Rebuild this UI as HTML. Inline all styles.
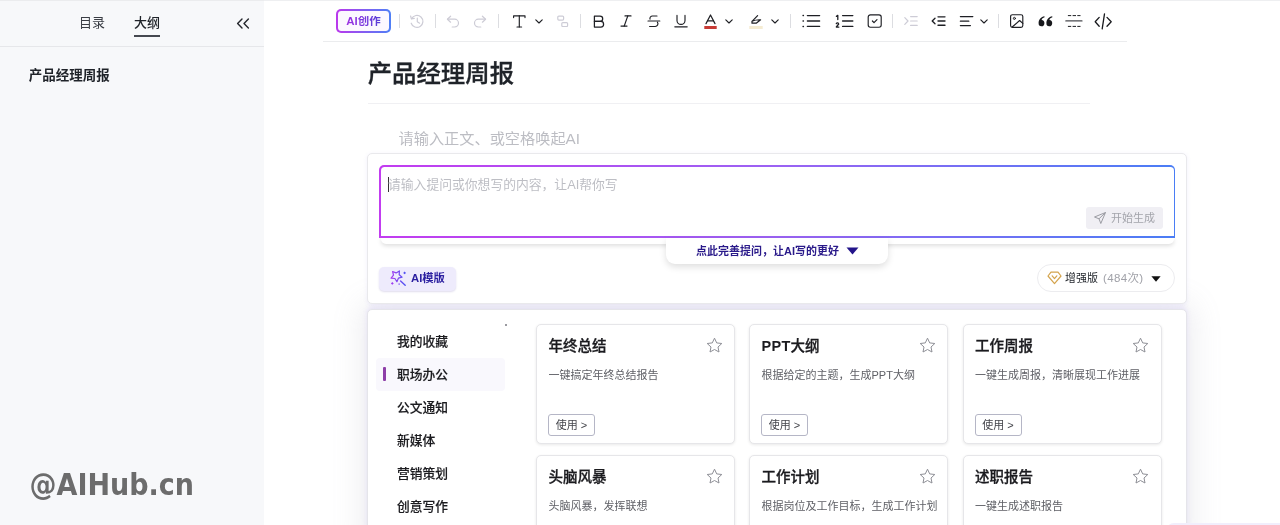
<!DOCTYPE html>
<html lang="zh-CN">
<head>
<meta charset="utf-8">
<title>产品经理周报</title>
<style>
*{box-sizing:border-box;margin:0;padding:0}
html,body{width:1280px;height:525px;overflow:hidden;background:#fff}
body{position:relative;font-family:"Liberation Sans","Noto Sans CJK SC",sans-serif;color:#1f2329;-webkit-font-smoothing:antialiased;will-change:transform}
.abs{position:absolute}
.t{position:absolute;white-space:nowrap;line-height:1}
/* sidebar */
#side{position:absolute;left:0;top:0;width:264px;height:525px;background:#f7f8fa}
#side .topline{position:absolute;left:0;top:0;width:264px;height:1px;background:#ebecee}
#side .hr{position:absolute;left:0;top:46px;width:264px;height:1px;background:#e6e7ea}
/* toolbar */
#tb{position:absolute;left:323px;top:0;width:804px;height:42px;border-bottom:1px solid #ebecee}
#tb svg{position:absolute;overflow:visible}
.sep{position:absolute;top:14px;width:1px;height:14px;background:#dcdde1}
/* ai box */
#aibox{position:absolute;left:367px;top:153px;width:820px;height:151px;border:1px solid #e9e9ec;border-radius:5px;background:#fff;box-shadow:0 1px 4px rgba(120,100,220,.10)}
#inp{position:absolute;left:379.3px;top:165.3px;width:795.6px;height:72.4px;border-radius:5px 5px 0 0;background:linear-gradient(90deg,#c23cf0 0%,#9b62f3 50%,#4a7df5 100%)}
#inp i{position:absolute;left:1.3px;top:1.3px;right:1.3px;bottom:1.3px;background:#fff;border-radius:3.7px 3.7px 0 0}
#inpf{position:absolute;left:380.5px;top:237px;width:793.5px;height:6.5px;border-radius:0 0 5px 5px;background:#fff;box-shadow:0 2px 4px rgba(0,0,0,.13)}
#panel{position:absolute;left:367px;top:309px;width:820px;height:240px;border:1px solid #e5e5ea;border-radius:5px;background:#fff;box-shadow:0 0 30px 6px rgba(140,140,160,.16),0 -2px 5px rgba(124,92,240,.12)}
.card{position:absolute;width:199px;height:119.5px;border:1px solid #e6e6e9;border-radius:5px;background:#fff;box-shadow:0 1px 3px rgba(0,0,0,.09)}
.card .h{position:absolute;left:11.5px;top:12.3px;font-size:14.5px;font-weight:500;line-height:18px;color:#1b1b1f;white-space:nowrap;-webkit-text-stroke:0.3px #1b1b1f}
.card .d{position:absolute;left:11.5px;top:41.7px;font-size:11px;line-height:16px;color:#5f6066;white-space:nowrap}
.card .u{position:absolute;left:11px;top:88.5px;width:47px;height:22px;border:1px solid #b5b6c6;border-radius:3px;font-size:11px;line-height:21px;text-align:center;color:#44454b;white-space:nowrap}
.card svg{position:absolute;left:168.5px;top:12px}
.cat{position:absolute;left:397px;font-size:12.75px;line-height:16px;font-weight:500;color:#1b1b1f;white-space:nowrap;-webkit-text-stroke:0.15px #1b1b1f}
</style>
</head>
<body>

<div id="side">
  <div class="topline"></div>
  <div class="t" style="left:79px;top:16px;font-size:13px;color:#3a3d44">目录</div>
  <div class="t" style="left:134px;top:16px;font-size:13px;font-weight:500;color:#1f2329">大纲</div>
  <div class="abs" style="left:134px;top:35px;width:26px;height:1.7px;background:#454850"></div>
  <svg class="abs" style="left:236px;top:18px" width="14" height="11" viewBox="0 0 14 11" fill="none" stroke="#25272d" stroke-width="1.4" stroke-linecap="round" stroke-linejoin="round"><path d="M6 1 L1.6 5.5 L6 10 M12.4 1 L8 5.5 L12.4 10"/></svg>
  <div class="hr"></div>
  <div class="t" style="left:28.8px;top:68.6px;font-size:13.5px;font-weight:700;color:#1f2329">产品经理周报</div>
  <div class="t" style="left:29.5px;top:470px;font-size:30px;font-weight:700;color:#6c6c6c;font-family:'DejaVu Sans Condensed','DejaVu Sans','Liberation Sans',sans-serif">@AIHub.cn</div>
</div>

<div class="abs" style="left:264px;top:0;width:1016px;height:1px;background:#eeeff1"></div>

<div id="tb">
  <!-- AI创作 button -->
  <div class="abs" style="left:13px;top:9px;width:55px;height:24px;border-radius:5px;background:linear-gradient(90deg,#bb38ec,#4f80f6)"><div class="abs" style="left:1.6px;top:1.6px;right:1.6px;bottom:1.6px;border-radius:3.4px;background:#fcf8ff"></div><div class="t" style="left:0;width:55px;text-align:center;top:6.5px;font-size:11.5px;font-weight:700;color:#7a2be0;background:linear-gradient(90deg,#9a2fe2 20%,#5a40d8 80%);-webkit-background-clip:text;background-clip:text;-webkit-text-fill-color:transparent">AI创作</div></div>
</div>


<!-- toolbar icons -->
<div class="sep" style="left:399px"></div>
<svg class="abs" style="left:409px;top:14px" width="16" height="15" viewBox="0 0 16 15" fill="none" stroke="#cdccd6" stroke-width="1.2" stroke-linecap="round" stroke-linejoin="round"><path d="M2.6 4.6 A6 6 0 1 1 2.2 9.2"/><path d="M1.6 2 L2.4 4.9 L5.3 4.3"/><path d="M8.3 4.2 V7.8 L10.6 9.2"/></svg>
<div class="sep" style="left:435px"></div>
<svg class="abs" style="left:446px;top:15px" width="14" height="13" viewBox="0 0 14 13" fill="none" stroke="#cdccd6" stroke-width="1.2" stroke-linecap="round" stroke-linejoin="round"><path d="M4.6 1.2 L1.4 4.2 L4.6 7.2"/><path d="M1.6 4.2 H8.6 A3.9 3.9 0 0 1 8.6 12 H6.2"/></svg>
<svg class="abs" style="left:473px;top:15px" width="14" height="13" viewBox="0 0 14 13" fill="none" stroke="#cdccd6" stroke-width="1.2" stroke-linecap="round" stroke-linejoin="round"><path d="M9.4 1.2 L12.6 4.2 L9.4 7.2"/><path d="M12.4 4.2 H5.4 A3.9 3.9 0 0 0 5.4 12 H7.8"/></svg>
<div class="sep" style="left:498px"></div>
<svg class="abs" style="left:512px;top:15px" width="14" height="13" viewBox="0 0 14 13" fill="none" stroke="#1e1f24" stroke-width="1.15" stroke-linecap="round" stroke-linejoin="round"><path d="M1.6 2.6 V0.8 H13 V2.6"/><path d="M7.3 0.8 V12"/><path d="M5 12 H9.6"/></svg>
<svg class="abs" style="left:535px;top:19px" width="8" height="5" viewBox="0 0 8 5" fill="none" stroke="#1e1f24" stroke-width="1.15" stroke-linecap="round" stroke-linejoin="round"><path d="M0.8 0.8 L4 4 L7.2 0.8"/></svg>
<svg class="abs" style="left:556px;top:15px" width="13" height="12" viewBox="0 0 13 12" fill="none" stroke="#cdccd6" stroke-width="1.2" stroke-linejoin="round"><rect x="1.8" y="1.1" width="5.8" height="4" rx="1"/><rect x="5.8" y="7.6" width="5.8" height="4" rx="1"/></svg>
<div class="sep" style="left:580px"></div>
<svg class="abs" style="left:593px;top:14.5px" width="13" height="13" viewBox="0 0 13 13" fill="none" stroke="#1e1f24" stroke-width="1.25" stroke-linejoin="round"><path d="M1.4 1 H7 A2.7 2.7 0 0 1 7 6.4 H1.4 Z"/><path d="M1.4 6.4 H7.8 A2.8 2.8 0 0 1 7.8 12 H1.4 Z"/></svg>
<svg class="abs" style="left:620px;top:15px" width="12" height="12" viewBox="0 0 12 12" fill="none" stroke="#1e1f24" stroke-width="1.2" stroke-linecap="round"><path d="M5 0.9 H11"/><path d="M1 11.1 H7"/><path d="M7.8 0.9 L4.2 11.1"/></svg>
<svg class="abs" style="left:647px;top:14px" width="14" height="14" viewBox="0 0 14 14" fill="none" stroke="#1e1f24" stroke-width="1.15" stroke-linecap="round" stroke-linejoin="round"><path d="M10 2 H5.4 A2.5 2.5 0 0 0 3 5.2"/><path d="M1 7 H12.8"/><path d="M2.6 12.5 H8.2 A2.7 2.7 0 0 0 10.4 8.2"/></svg>
<svg class="abs" style="left:674px;top:14px" width="14" height="14" viewBox="0 0 14 14" fill="none" stroke="#1e1f24" stroke-width="1.15" stroke-linecap="round" stroke-linejoin="round"><path d="M3 1.4 V6.4 A4 4 0 0 0 11 6.4 V1.4"/><path d="M0.8 12.8 H13.2"/></svg>
<svg class="abs" style="left:704px;top:14px" width="13" height="15" viewBox="0 0 13 15" fill="none" stroke="#1e1f24" stroke-width="1.2" stroke-linecap="round" stroke-linejoin="round"><path d="M2 9.6 L6.5 1 L11 9.6"/><path d="M3.6 6.8 H9.4"/><rect x="0.3" y="12" width="12.4" height="3" fill="#c73a35" stroke="none"/></svg>
<svg class="abs" style="left:725px;top:19px" width="8" height="5" viewBox="0 0 8 5" fill="none" stroke="#1e1f24" stroke-width="1.15" stroke-linecap="round" stroke-linejoin="round"><path d="M0.8 0.8 L4 4 L7.2 0.8"/></svg>
<svg class="abs" style="left:749px;top:14px" width="14" height="15" viewBox="0 0 14 15" fill="none" stroke="#1e1f24" stroke-width="1.2" stroke-linecap="round" stroke-linejoin="round"><rect x="0.3" y="12" width="13.4" height="3" fill="#f5ecd2" stroke="none"/><path d="M8.6 1.6 L3 7.3 V9.2 H7.2 L11.6 5.8 C8.6 5.6 5.6 6.2 3 7.3"/></svg>
<svg class="abs" style="left:771px;top:19px" width="8" height="5" viewBox="0 0 8 5" fill="none" stroke="#1e1f24" stroke-width="1.15" stroke-linecap="round" stroke-linejoin="round"><path d="M0.8 0.8 L4 4 L7.2 0.8"/></svg>
<div class="sep" style="left:790px"></div>
<svg class="abs" style="left:802px;top:14px" width="19" height="14" viewBox="0 0 19 14" fill="none" stroke="#1e1f24" stroke-width="1.4" stroke-linecap="round"><path d="M5.4 1.6 H17.6 M5.4 7 H17.6 M5.4 12.4 H17.6"/><path d="M1 1.5 H1.5 M1 7 H1.5 M1 12.5 H1.5" stroke-width="1.3"/></svg>
<svg class="abs" style="left:835px;top:14px" width="19" height="14" viewBox="0 0 19 14" fill="none" stroke="#1e1f24" stroke-width="1.4" stroke-linecap="round"><path d="M7.6 1.6 H17.8 M7.6 7 H17.8 M7.6 12.4 H17.8"/><path d="M1.4 2.4 L2.8 1.4 V5.6" stroke-width="1.3" stroke-linejoin="round"/><path d="M1.3 9.6 A1.3 1.3 0 0 1 3.7 10 L1.3 13 H3.9" stroke-width="1.25" stroke-linejoin="round"/></svg>
<svg class="abs" style="left:867px;top:14px" width="15" height="14" viewBox="0 0 15 14" fill="none" stroke="#1e1f24" stroke-width="1.15" stroke-linecap="round" stroke-linejoin="round"><rect x="1.2" y="0.8" width="13" height="12.4" rx="2.2"/><path d="M5.4 7 L7 8.7 L10 5.6" stroke-width="1.2"/></svg>
<div class="sep" style="left:892px"></div>
<svg class="abs" style="left:904px;top:15px" width="14" height="12" viewBox="0 0 14 12" fill="none" stroke="#cdccd6" stroke-width="1.2" stroke-linecap="round" stroke-linejoin="round"><path d="M0.8 2.6 L4 6 L0.8 9.4"/><path d="M6.6 1.6 H13.2 M6.6 6 H13.2 M6.6 10.4 H13.2"/></svg>
<svg class="abs" style="left:931px;top:15px" width="15" height="12" viewBox="0 0 15 12" fill="none" stroke="#1e1f24" stroke-width="1.35" stroke-linecap="round" stroke-linejoin="round"><path d="M4 3.2 L1.2 6 L4 8.8"/><path d="M7 1.8 H14 M7 6 H14 M7 10.2 H14"/></svg>
<svg class="abs" style="left:959px;top:15px" width="16" height="12" viewBox="0 0 16 12" fill="none" stroke="#1e1f24" stroke-width="1.3" stroke-linecap="round"><path d="M1.4 1.6 H13.8 M1.4 6.2 H9.8 M1.4 10.6 H11.4"/></svg>
<svg class="abs" style="left:980px;top:19px" width="8" height="5" viewBox="0 0 8 5" fill="none" stroke="#1e1f24" stroke-width="1.15" stroke-linecap="round" stroke-linejoin="round"><path d="M0.8 0.8 L4 4 L7.2 0.8"/></svg>
<div class="sep" style="left:998px"></div>
<svg class="abs" style="left:1009px;top:14px" width="15" height="14" viewBox="0 0 15 14" fill="none" stroke="#1e1f24" stroke-width="1.15" stroke-linecap="round" stroke-linejoin="round"><rect x="1.6" y="0.7" width="12.2" height="12.6" rx="1.8"/><circle cx="5.4" cy="4.4" r="1.05" stroke-width="1"/><path d="M3.2 13 L10.6 6.5 L13.8 9.4"/></svg>
<svg class="abs" style="left:1037.5px;top:15.7px" width="15" height="11" viewBox="0 0 15 10" preserveAspectRatio="none" fill="#17181c"><path d="M6.4 0.2 C3.2 0.8 0.6 3 0.6 6.4 A2.9 2.9 0 1 0 3.6 3.6 C3.9 2.4 5 1.6 6.6 1.2 Z"/><path d="M14.2 0.2 C11 0.8 8.4 3 8.4 6.4 A2.9 2.9 0 1 0 11.4 3.6 C11.7 2.4 12.8 1.6 14.4 1.2 Z"/></svg>
<svg class="abs" style="left:1065px;top:15px" width="18" height="13" viewBox="0 0 18 13" fill="none" stroke="#1e1f24" stroke-width="1" stroke-linecap="butt"><path d="M0.8 5.9 H17" stroke="#4a4b50" stroke-width="1.1" stroke-linecap="round"/><path d="M2.9 0.6 H6.2 M7.6 0.6 H11 M12.3 0.6 H15.5"/><path d="M2.9 11.4 H6.2 M7.6 11.4 H11 M12.3 11.4 H15.5"/></svg>
<svg class="abs" style="left:1094px;top:13px" width="19" height="17" viewBox="0 0 19 17" fill="none" stroke="#17181c" stroke-width="1.3" stroke-linecap="round" stroke-linejoin="round"><path d="M5.2 4.4 L1.2 8.8 L5.2 13.2"/><path d="M13 4.4 L17.2 8.8 L13 13.2"/><path d="M10.5 0.8 L8.2 15.8"/></svg>

<!-- title -->
<div class="t" style="left:367.7px;top:62.2px;font-size:24.4px;font-weight:500;-webkit-text-stroke:0.32px #1f2329;color:#1f2329">产品经理周报</div>
<div class="abs" style="left:368px;top:102.8px;width:722px;height:1.5px;background:#f0f0f3"></div>
<div class="t" style="left:398.5px;top:130.5px;font-size:15.2px;color:#bcbdc3">请输入正文、或空格唤起AI</div>

<div id="panel"></div>
<div id="aibox"></div>
<div id="inpf"></div>
<div id="inp"><i></i></div>
<div class="abs" style="left:388px;top:177px;width:1px;height:15px;background:#333"></div>
<div class="t" style="left:388px;top:178.8px;font-size:12.8px;color:#bdbec4">请输入提问或你想写的内容，让AI帮你写</div>

<!-- start button -->
<div class="abs" style="left:1086px;top:207px;width:77px;height:21.5px;border-radius:3px;background:#f0eff4"></div>
<svg class="abs" style="left:1093px;top:211px" width="14" height="14" viewBox="0 0 14 14" fill="none" stroke="#9b9ca3" stroke-width="1" stroke-linejoin="round"><path d="M12.5 1.5 L1.5 6 L6 7.8 L7.8 12.5 Z M6 7.8 L12.5 1.5"/></svg>
<div class="t" style="left:1111px;top:212.5px;font-size:11px;color:#a3a4ab">开始生成</div>

<!-- pill -->
<div class="abs" style="left:666.3px;top:238px;width:222px;height:25.8px;border-radius:0 0 9px 9px;background:#fff;box-shadow:0 3px 7px rgba(0,0,0,.13)"></div>
<div class="abs" style="left:666.3px;top:238px;width:222px;height:5px;background:#fff"></div>
<div class="t" style="left:696px;top:246px;font-size:11px;font-weight:700;color:#2a1a8a">点此完善提问，让AI写的更好</div>
<svg class="abs" style="left:846px;top:247px" width="13" height="8" viewBox="0 0 13 8"><path d="M0.5 0.5 H12.5 L6.5 7.5 Z" fill="#23148a"/></svg>

<!-- AI模版 -->
<div class="abs" style="left:379px;top:267px;width:77px;height:23.5px;border-radius:5px;background:#eeebfc;box-shadow:0 1px 2px rgba(60,40,140,.16)"></div>
<svg class="abs" style="left:389px;top:269px" width="19" height="18" viewBox="0 0 19 18" fill="none" stroke="url(#wg)" stroke-width="1.2" stroke-linejoin="round" stroke-linecap="round"><defs><linearGradient id="wg" x1="0" y1="0" x2="19" y2="0" gradientUnits="userSpaceOnUse"><stop offset="0.1" stop-color="#a63af0"/><stop offset="0.9" stop-color="#4a55f2"/></linearGradient></defs><path d="M10.4 1.9 L10.2 5.7 L13.1 8.2 L9.4 9.2 L7.9 12.7 L5.9 9.5 L2.1 9.2 L4.5 6.2 L3.6 2.5 L7.1 3.9 Z"/><path d="M11.6 11.9 L16.2 16.3" stroke-width="1.4"/><path d="M15.6 2.5 L17 3.9 L15.6 5.3 L14.2 3.9 Z" fill="url(#wg)" stroke="none"/><path d="M3.3 13 L4.7 14.4 L3.3 15.8 L1.9 14.4 Z" fill="url(#wg)" stroke="none"/><path d="M10.1 14.2 L11 15.1 L10.1 16 L9.2 15.1 Z" fill="url(#wg)" stroke="none"/></svg>
<div class="t" style="left:411px;top:273px;font-size:11.3px;font-weight:700;color:#2b1fa0">AI模版</div>

<!-- 增强版 -->
<div class="abs" style="left:1037px;top:264px;width:138px;height:28px;border-radius:14px;border:1px solid #ececef;background:#fff"></div>
<svg class="abs" style="left:1047px;top:271px" width="15" height="14" viewBox="0 0 15 14" fill="none" stroke="#d4a44e" stroke-width="1.2" stroke-linejoin="round" stroke-linecap="round"><path d="M4 1.2 H11 L14 5 L7.5 12.6 L1 5 Z"/><path d="M5.2 4.8 L7.5 7.6 L9.8 4.8"/></svg>
<div class="t" style="left:1065px;top:272.5px;font-size:11px;color:#1f2329">增强版</div>
<div class="t" style="left:1103px;top:272.5px;font-size:11.5px;letter-spacing:.35px;color:#a0a1a8">(484次)</div>
<svg class="abs" style="left:1150.5px;top:275.5px" width="10" height="6" viewBox="0 0 10 6"><path d="M0.4 0.3 H9.6 L5 5.7 Z" fill="#111"/></svg>

<div class="abs" style="left:376px;top:358px;width:129px;height:33px;border-radius:4px;background:#f9f8fd"></div>
<div class="abs" style="left:383px;top:367px;width:3px;height:14px;border-radius:1px;background:#8e3fa8"></div>
<div class="abs" style="left:505px;top:324px;width:1.5px;height:1.5px;background:#9a9aa0"></div>
<div class="cat" style="top:334px">我的收藏</div>
<div class="cat" style="top:367px">职场办公</div>
<div class="cat" style="top:400px">公文通知</div>
<div class="cat" style="top:433px">新媒体</div>
<div class="cat" style="top:466px">营销策划</div>
<div class="cat" style="top:499px">创意写作</div>

<div class="card" style="left:536px;top:324px"><div class="h">年终总结</div><div class="d">一键搞定年终总结报告</div><div class="u">使用 &gt;</div><svg width="17" height="16" viewBox="0 0 17 16" fill="none" stroke="#8e8f96" stroke-width="1" stroke-linejoin="round"><path d="M8.5 1.2 L10.7 5.9 L15.8 6.5 L12 10 L13 15 L8.5 12.5 L4 15 L5 10 L1.2 6.5 L6.3 5.9 Z"/></svg></div>
<div class="card" style="left:749px;top:324px"><div class="h"><span style="font-weight:700;-webkit-text-stroke:0;letter-spacing:.3px">PPT</span>大纲</div><div class="d">根据给定的主题，生成PPT大纲</div><div class="u">使用 &gt;</div><svg width="17" height="16" viewBox="0 0 17 16" fill="none" stroke="#8e8f96" stroke-width="1" stroke-linejoin="round"><path d="M8.5 1.2 L10.7 5.9 L15.8 6.5 L12 10 L13 15 L8.5 12.5 L4 15 L5 10 L1.2 6.5 L6.3 5.9 Z"/></svg></div>
<div class="card" style="left:962.5px;top:324px"><div class="h">工作周报</div><div class="d">一键生成周报，清晰展现工作进展</div><div class="u">使用 &gt;</div><svg width="17" height="16" viewBox="0 0 17 16" fill="none" stroke="#8e8f96" stroke-width="1" stroke-linejoin="round"><path d="M8.5 1.2 L10.7 5.9 L15.8 6.5 L12 10 L13 15 L8.5 12.5 L4 15 L5 10 L1.2 6.5 L6.3 5.9 Z"/></svg></div>
<div class="card" style="left:536px;top:455px"><div class="h">头脑风暴</div><div class="d">头脑风暴，发挥联想</div><div class="u">使用 &gt;</div><svg width="17" height="16" viewBox="0 0 17 16" fill="none" stroke="#8e8f96" stroke-width="1" stroke-linejoin="round"><path d="M8.5 1.2 L10.7 5.9 L15.8 6.5 L12 10 L13 15 L8.5 12.5 L4 15 L5 10 L1.2 6.5 L6.3 5.9 Z"/></svg></div>
<div class="card" style="left:749px;top:455px"><div class="h">工作计划</div><div class="d">根据岗位及工作目标，生成工作计划</div><div class="u">使用 &gt;</div><svg width="17" height="16" viewBox="0 0 17 16" fill="none" stroke="#8e8f96" stroke-width="1" stroke-linejoin="round"><path d="M8.5 1.2 L10.7 5.9 L15.8 6.5 L12 10 L13 15 L8.5 12.5 L4 15 L5 10 L1.2 6.5 L6.3 5.9 Z"/></svg></div>
<div class="card" style="left:962.5px;top:455px"><div class="h">述职报告</div><div class="d">一键生成述职报告</div><div class="u">使用 &gt;</div><svg width="17" height="16" viewBox="0 0 17 16" fill="none" stroke="#8e8f96" stroke-width="1" stroke-linejoin="round"><path d="M8.5 1.2 L10.7 5.9 L15.8 6.5 L12 10 L13 15 L8.5 12.5 L4 15 L5 10 L1.2 6.5 L6.3 5.9 Z"/></svg></div>

<div class="abs" style="left:1166px;top:522.5px;width:130px;height:20px;border-radius:8px;background:#f1eefc"></div>
</body>
</html>
